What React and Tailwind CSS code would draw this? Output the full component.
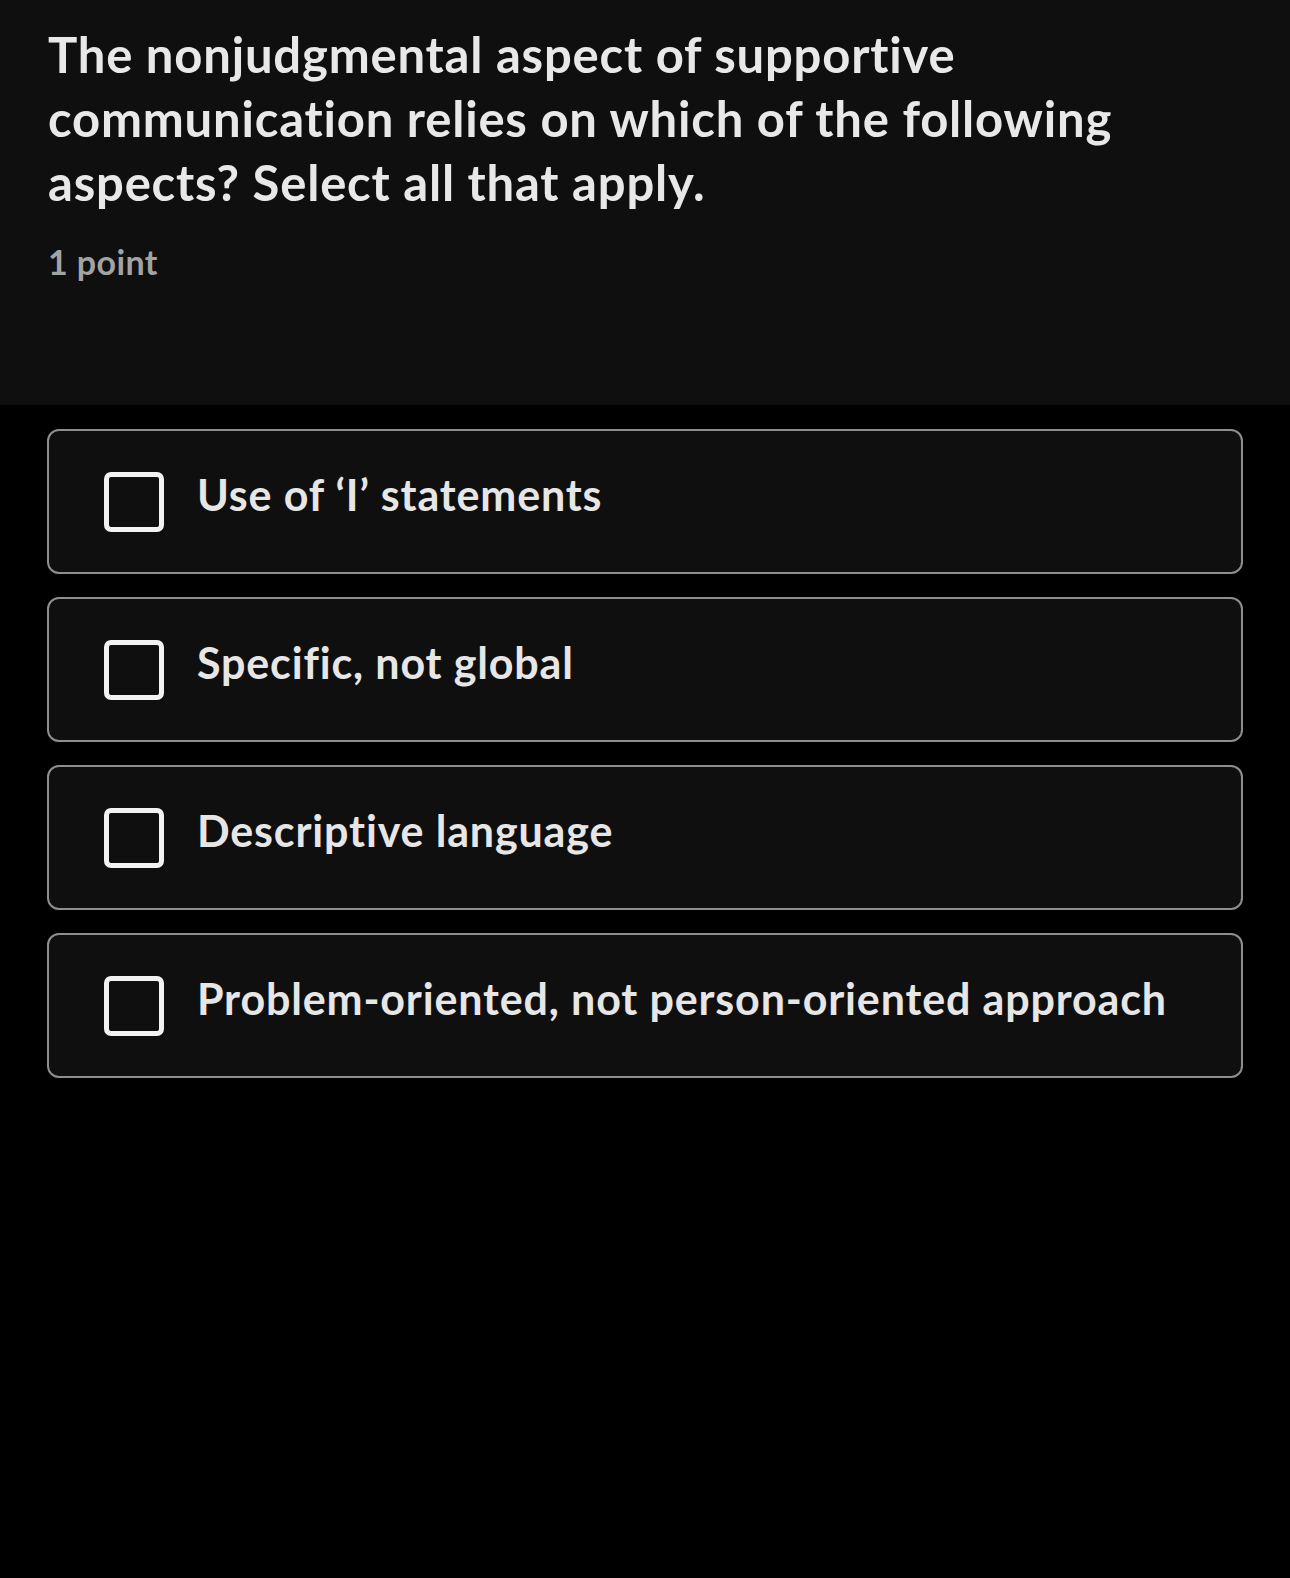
import React from 'react';

const options = [
  'Use of ‘I’ statements',
  'Specific, not global',
  'Descriptive language',
  'Problem-oriented, not person-oriented approach',
];

export default function App() {
  return (
    <div className="min-h-[1578px] bg-black text-[#e6e6e6]" style={{ fontFamily: 'Lato, "Noto Sans", sans-serif' }}>
      <div className="h-[405px] bg-[#0f0f0f] px-12 pt-[22px]">
        <h1 className="text-[49px] font-bold leading-[64px] tracking-[0.8px] text-[#e8e8e8]">
          The nonjudgmental aspect of supportive
          <br />
          communication relies on which of the following
          <br />
          aspects? Select all that apply.
        </h1>
        <div className="mt-[26px] text-[34px] font-bold leading-[44px] tracking-[0.4px] text-[#a3a3a3]">1 point</div>
      </div>

      <div className="flex flex-col gap-[23px] px-[47px] pt-[24px]">
        {options.map((o) => (
          <label
            key={o}
            className="flex h-[145px] items-center gap-[33px] rounded-[12px] border-2 border-[#8e8e8e] bg-[#0f0f0f] pl-[55px]"
          >
            <span className="h-[60px] w-[60px] shrink-0 rounded-[7px] border-[5px] border-[#f2f2f4]" />
            <span className="pb-[14px] text-[43px] font-bold leading-none tracking-[0.85px] text-[#e6e6e6]">{o}</span>
          </label>
        ))}
      </div>
    </div>
  );
}
